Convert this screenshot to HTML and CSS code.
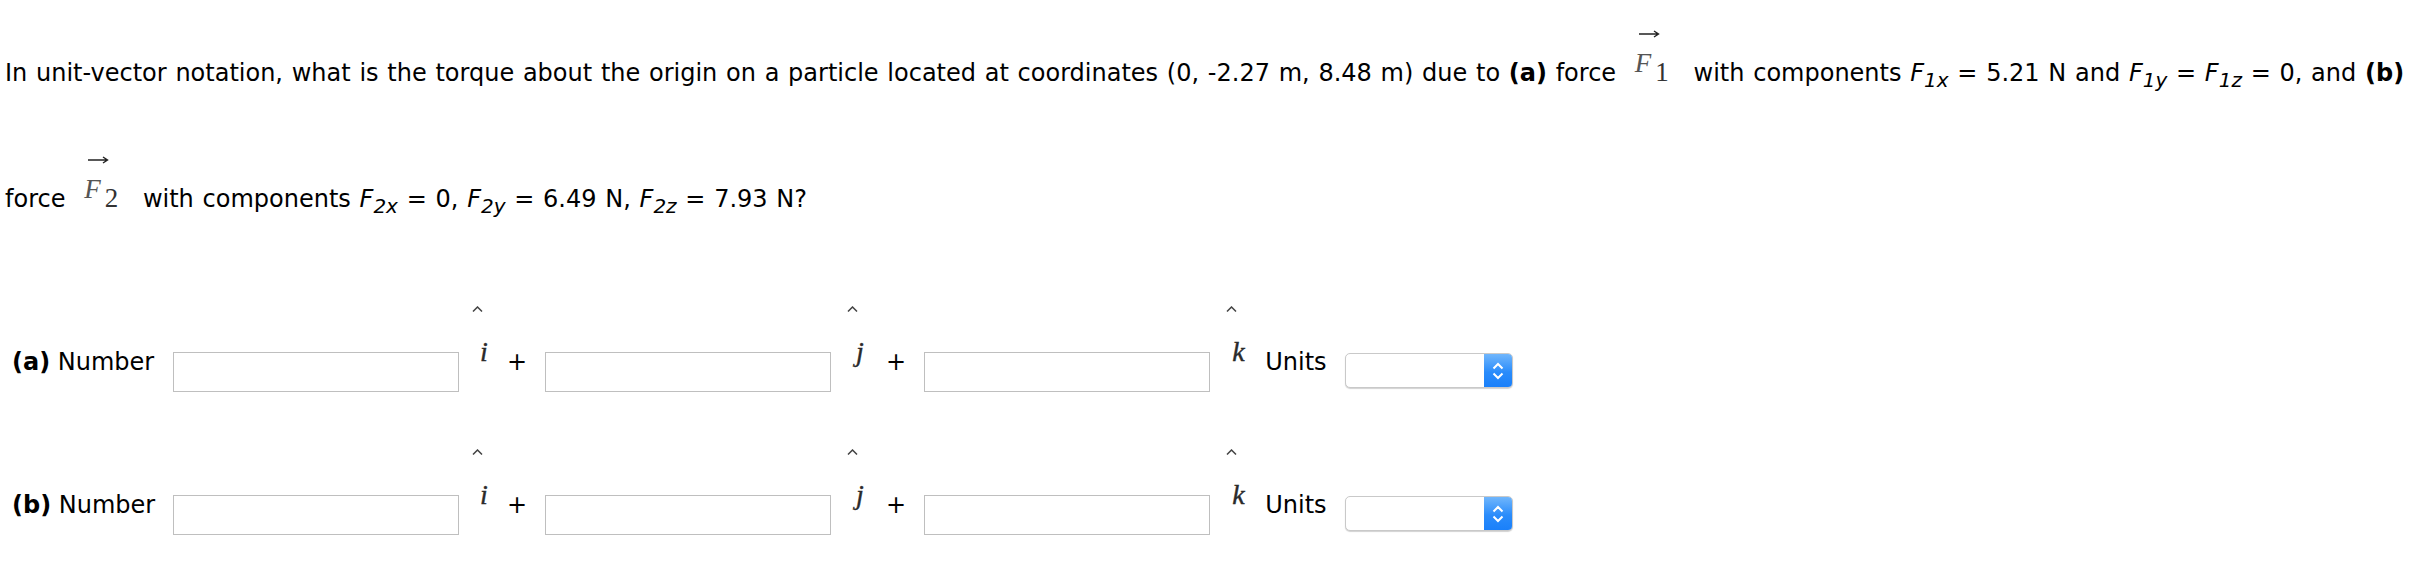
FILE: index.html
```html
<!DOCTYPE html>
<html lang="en">
<head>
<meta charset="utf-8">
<title>Torque question</title>
<link rel="stylesheet" href="styles.css">
</head>
<body>
<div class="question">
  <p class="prompt">In unit-vector notation, what is the torque about the origin on a particle located at coordinates (0, -2.27 m, 8.48 m) due to <b>(a)</b> force <span class="vec"><svg class="vec-arrow" viewBox="0 0 21 8" width="21" height="8"><path d="M0 4H19M15 1L19.5 4L15 7" fill="none" stroke="#222" stroke-width="1.4"/></svg><span class="vec-line"><span class="vec-f">F</span><span class="vec-n">1</span></span></span> with components <i>F<sub>1x</sub></i> = 5.21 N and <i>F<sub>1y</sub></i> = <i>F<sub>1z</sub></i> = 0, and <b>(b)</b><br>force <span class="vec"><svg class="vec-arrow" viewBox="0 0 21 8" width="21" height="8"><path d="M0 4H19M15 1L19.5 4L15 7" fill="none" stroke="#222" stroke-width="1.4"/></svg><span class="vec-line"><span class="vec-f">F</span><span class="vec-n">2</span></span></span> with components <i>F<sub>2x</sub></i> = 0, <i>F<sub>2y</sub></i> = 6.49 N, <i>F<sub>2z</sub></i> = 7.93 N?</p>

  <div class="answers">
    <div class="row">
      <span class="label"><b>(a)</b> Number</span>
      <input class="num" type="text">
      <span class="uv uv-i"><svg class="hat" viewBox="0 0 11 6" width="11" height="6"><path d="M1 5.5L5.5 1L10 5.5" fill="none" stroke="#444" stroke-width="1.5"/></svg><span class="uv-l">i</span></span>
      <span class="plus">+</span>
      <input class="num num-2" type="text">
      <span class="uv uv-j"><svg class="hat" viewBox="0 0 11 6" width="11" height="6"><path d="M1 5.5L5.5 1L10 5.5" fill="none" stroke="#444" stroke-width="1.5"/></svg><span class="uv-l">j</span></span>
      <span class="plus">+</span>
      <input class="num num-3" type="text">
      <span class="uv uv-k"><svg class="hat" viewBox="0 0 11 6" width="11" height="6"><path d="M1 5.5L5.5 1L10 5.5" fill="none" stroke="#444" stroke-width="1.5"/></svg><span class="uv-l">k</span></span>
      <span class="units">Units</span>
      <span class="select"><select class="select-field"><option></option></select><span class="select-btn"><svg viewBox="0 0 12 20" width="12" height="20"><path d="M1.5 7.5L6 3L10.5 7.5M1.5 12.5L6 17L10.5 12.5" fill="none" stroke="#fff" stroke-width="2"/></svg></span></span>
    </div>
    <div class="row">
      <span class="label"><b>(b)</b> Number</span>
      <input class="num" type="text">
      <span class="uv uv-i"><svg class="hat" viewBox="0 0 11 6" width="11" height="6"><path d="M1 5.5L5.5 1L10 5.5" fill="none" stroke="#444" stroke-width="1.5"/></svg><span class="uv-l">i</span></span>
      <span class="plus">+</span>
      <input class="num num-2" type="text">
      <span class="uv uv-j"><svg class="hat" viewBox="0 0 11 6" width="11" height="6"><path d="M1 5.5L5.5 1L10 5.5" fill="none" stroke="#444" stroke-width="1.5"/></svg><span class="uv-l">j</span></span>
      <span class="plus">+</span>
      <input class="num num-3" type="text">
      <span class="uv uv-k"><svg class="hat" viewBox="0 0 11 6" width="11" height="6"><path d="M1 5.5L5.5 1L10 5.5" fill="none" stroke="#444" stroke-width="1.5"/></svg><span class="uv-l">k</span></span>
      <span class="units">Units</span>
      <span class="select"><select class="select-field"><option></option></select><span class="select-btn"><svg viewBox="0 0 12 20" width="12" height="20"><path d="M1.5 7.5L6 3L10.5 7.5M1.5 12.5L6 17L10.5 12.5" fill="none" stroke="#fff" stroke-width="2"/></svg></span></span>
    </div>
  </div>
</div>
</body>
</html>
```
FILE: styles.css
```css
html, body {
  margin: 0;
  padding: 0;
  background: #fff;
}

body {
  font-family: "DejaVu Sans", Verdana, sans-serif;
  font-size: 24px;
  color: #000;
}

.question {
  padding: 10px 0 0 5px;
}

.prompt {
  margin: 0;
  line-height: 126px;
  white-space: nowrap;
  word-spacing: 1.1px;
}

.prompt i {
  font-style: italic;
}

.prompt sub {
  font-size: 20px;
  line-height: 0;
  vertical-align: -6px;
}

.vec {
  display: inline-block;
  line-height: 27px;
  font-family: "Liberation Serif", "Times New Roman", serif;
  font-size: 27px;
  margin: 0 16px 0 10px;
}

.vec-arrow {
  display: block;
  margin: 0 0 21px 4px;
}

.vec-line {
  display: block;
}

.vec-f {
  font-style: italic;
  color: #555;
  line-height: 0;
  vertical-align: 9px;
  margin-right: 4px;
}

.vec-n {
  color: #333;
}

.answers {
  display: flex;
  flex-direction: column;
  gap: 51px;
  margin-top: 38px;
  padding-left: 7px;
}

.row {
  display: flex;
  align-items: flex-start;
}

.label {
  width: 161px;
  margin-top: 48px;
  line-height: 28px;
}

.num {
  box-sizing: border-box;
  width: 286px;
  height: 40px;
  margin: 52px 0 0 0;
  padding: 0 6px;
  border: 1px solid #bfbfbf;
  background: #fff;
  font: inherit;
  outline: none;
}

.num-2 {
  margin-left: 18px;
}

.num-3 {
  margin-left: 18px;
}

.uv {
  display: flex;
  flex-direction: column;
  align-items: flex-start;
  margin-top: 6px;
}

.uv-i {
  width: 35px;
  margin-left: 13px;
}

.uv-j {
  width: 39px;
  margin-left: 16px;
}

.uv-k {
  width: 39px;
  margin-left: 16px;
}

.hat {
  display: block;
}

.uv-l {
  margin-top: 26px;
  font-family: "Liberation Serif", "Times New Roman", serif;
  font-style: italic;
  font-size: 28px;
  line-height: 28px;
  color: #2a2a2a;
  -webkit-text-stroke: 0.4px #2a2a2a;
}

.uv-i .uv-l {
  padding-left: 8px;
}

.uv-j .uv-l {
  padding-left: 9px;
}

.uv-k .uv-l {
  padding-left: 6px;
}

.plus {
  margin-top: 48px;
  line-height: 28px;
}

.units {
  margin-top: 48px;
  line-height: 28px;
}

.select {
  box-sizing: border-box;
  display: flex;
  width: 168px;
  height: 35px;
  margin: 53px 0 0 18px;
  border: 1px solid #c9c9c9;
  border-radius: 5px;
  overflow: hidden;
  background: #fff;
  box-shadow: 0 1px 1px rgba(0, 0, 0, 0.18);
}

.select-field {
  flex: 1;
  min-width: 0;
  border: 0;
  margin: 0;
  padding: 0;
  background: transparent;
  appearance: none;
  -webkit-appearance: none;
  font: inherit;
  outline: none;
}

.select-btn {
  width: 28px;
  display: flex;
  align-items: center;
  justify-content: center;
  background: linear-gradient(#70b6fc, #2a8cfb 55%, #1a80fa);
}
```
